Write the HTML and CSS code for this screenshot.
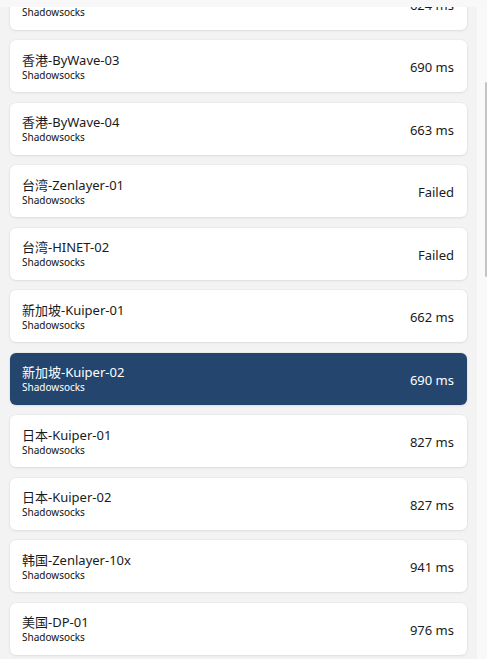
FILE: index.html
```html
<!DOCTYPE html>
<html lang="zh">

<head>
    <meta charset="UTF-8">
    <meta name="viewport" content="width=device-width, initial-scale=1.0">
    <title>Servers</title>
    <link rel="stylesheet" href="styles.css">
</head>

<body>
    <div class="topbar"></div>

    <div class="main">
        <div class="viewport">
            <div class="list">

                <div class="server">
                    <div class="info">
                        <span class="name">香港-ByWave-02</span>
                        <span class="type">Shadowsocks</span>
                    </div>
                    <span class="delay">624 ms</span>
                </div>

                <div class="server">
                    <div class="info">
                        <span class="name">香港-ByWave-03</span>
                        <span class="type">Shadowsocks</span>
                    </div>
                    <span class="delay">690 ms</span>
                </div>

                <div class="server">
                    <div class="info">
                        <span class="name">香港-ByWave-04</span>
                        <span class="type">Shadowsocks</span>
                    </div>
                    <span class="delay">663 ms</span>
                </div>

                <div class="server">
                    <div class="info">
                        <span class="name">台湾-Zenlayer-01</span>
                        <span class="type">Shadowsocks</span>
                    </div>
                    <span class="delay">Failed</span>
                </div>

                <div class="server">
                    <div class="info">
                        <span class="name">台湾-HINET-02</span>
                        <span class="type">Shadowsocks</span>
                    </div>
                    <span class="delay">Failed</span>
                </div>

                <div class="server">
                    <div class="info">
                        <span class="name">新加坡-Kuiper-01</span>
                        <span class="type">Shadowsocks</span>
                    </div>
                    <span class="delay">662 ms</span>
                </div>

                <div class="server selected">
                    <div class="info">
                        <span class="name">新加坡-Kuiper-02</span>
                        <span class="type">Shadowsocks</span>
                    </div>
                    <span class="delay">690 ms</span>
                </div>

                <div class="server">
                    <div class="info">
                        <span class="name">日本-Kuiper-01</span>
                        <span class="type">Shadowsocks</span>
                    </div>
                    <span class="delay">827 ms</span>
                </div>

                <div class="server">
                    <div class="info">
                        <span class="name">日本-Kuiper-02</span>
                        <span class="type">Shadowsocks</span>
                    </div>
                    <span class="delay">827 ms</span>
                </div>

                <div class="server">
                    <div class="info">
                        <span class="name">韩国-Zenlayer-10x</span>
                        <span class="type">Shadowsocks</span>
                    </div>
                    <span class="delay">941 ms</span>
                </div>

                <div class="server">
                    <div class="info">
                        <span class="name">美国-DP-01</span>
                        <span class="type">Shadowsocks</span>
                    </div>
                    <span class="delay">976 ms</span>
                </div>

                <div class="server">
                    <div class="info">
                        <span class="name">美国-DP-02</span>
                        <span class="type">Shadowsocks</span>
                    </div>
                    <span class="delay">981 ms</span>
                </div>

            </div>
        </div>

        <div class="scrollbar">
            <div class="thumb"></div>
        </div>
    </div>
</body>

</html>
```

FILE: styles.css
```css
html,
body {
    height: 100%;
}

body {
    margin: 0;
    padding: 0;
    display: flex;
    flex-direction: column;
    background: #f3f3f3;
    font-family: "Noto Sans", "Noto Sans CJK SC", sans-serif;
    color: #1b1b1b;
    overflow: hidden;
}

.topbar {
    height: 7px;
    flex: none;
    background: #f8f8f8;
    position: relative;
    z-index: 2;
}

.main {
    flex: 1;
    display: flex;
    min-height: 0;
}

.viewport {
    flex: 1;
    overflow: hidden;
    padding: 0 10px;
}

/* list is scrolled a bit down */
.list {
    margin-top: -29.5px;
    display: flex;
    flex-direction: column;
    gap: 10.5px;
}

.server {
    height: 52px;
    flex: none;
    box-sizing: border-box;
    display: flex;
    align-items: center;
    justify-content: space-between;
    padding: 0 13px 0 12px;
    background: #fff;
    border-radius: 6px;
    box-shadow: 0 0 0 1px rgba(0, 0, 0, 0.025), 0 1px 3px rgba(0, 0, 0, 0.07);
}

.info {
    display: flex;
    flex-direction: column;
}

.name {
    font-size: 13px;
    line-height: 16px;
}

.type {
    font-size: 10px;
    line-height: 12px;
    margin-top: 1px;
    color: #111;
}

.delay {
    font-size: 13px;
    line-height: 16px;
    margin-top: 2px;
}

.server.selected {
    background: #24456e;
    color: #fff;
}

.server.selected .type {
    color: #fff;
}

.scrollbar {
    width: 10px;
    flex: none;
    background: #f9f9f9;
}

.thumb {
    width: 2px;
    height: 195px;
    margin: 75px 0 0 8px;
    background: #c4c4c4;
    border-radius: 1px;
}
```
